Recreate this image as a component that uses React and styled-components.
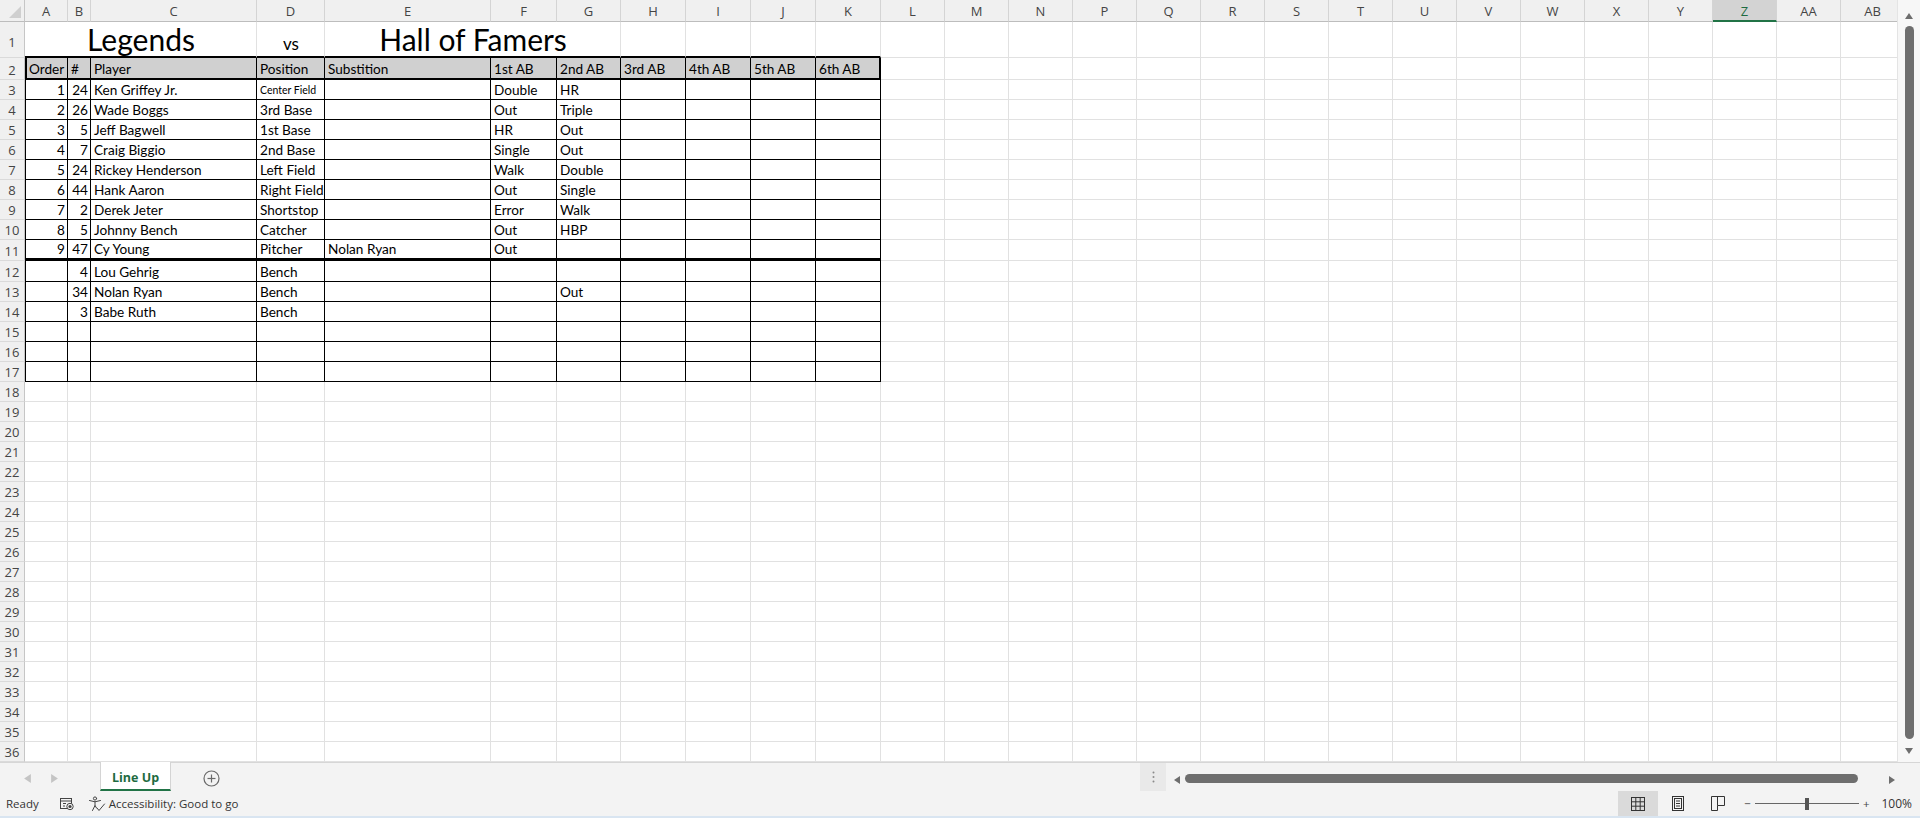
import React from "react";
import styled, { createGlobalStyle } from "styled-components";

const GlobalStyle = createGlobalStyle`
  html, body {
    margin: 0;
    padding: 0;
    overflow: hidden;
    background: #ffffff;
  }
`;

const UI_FONT = `"Open Sans", "Noto Sans", "Liberation Sans", sans-serif`;
const CELL_FONT = `Lato, "Liberation Sans", sans-serif`;
const GRID = "#e1e1e1";
const INK = "#000000";

const Frame = styled("div")`
  width: 1920px;
  height: 818px;
  display: flex;
  flex-direction: column;
  background: #ffffff;
`;

const SheetArea = styled("div")`
  display: flex;
  height: 762px;
  flex: none;
`;

const GridWrap = styled("div")`
  flex: 1;
  overflow: hidden;
  display: flex;
  flex-direction: column;
`;

const Row = styled("div")`
  display: flex;
  height: ${(p) => p.$h}px;
  flex: none;
`;

const Corner = styled("div")`
  width: 25px;
  flex: none;
  box-sizing: border-box;
  background: #f0f0f0;
  border-right: 1px solid #c6c6c6;
  border-bottom: 1px solid #bdbdbd;
  display: flex;
  align-items: flex-end;
  justify-content: flex-end;
  padding: 0 3px 3px 0;
`;

const ColHead = styled("div")`
  width: ${(p) => p.$w}px;
  flex: none;
  box-sizing: border-box;
  background: ${(p) => (p.$active ? "#d3d3d3" : "#f0f0f0")};
  border-right: 1px solid #d4d4d4;
  border-bottom: ${(p) => (p.$active ? "2px solid #217346" : "1px solid #bdbdbd")};
  color: ${(p) => (p.$active ? "#1e6b41" : "#454545")};
  font-family: ${UI_FONT};
  font-size: 13px;
  display: flex;
  align-items: center;
  justify-content: center;
  padding-top: 1px;
`;

const RowHead = styled("div")`
  width: 25px;
  flex: none;
  box-sizing: border-box;
  background: #f0f0f0;
  border-right: 1px solid #c6c6c6;
  border-bottom: 1px solid #dadada;
  color: #454545;
  font-family: ${UI_FONT};
  font-size: 13px;
  line-height: 18px;
  display: flex;
  align-items: flex-end;
  justify-content: center;
  padding-bottom: ${(p) => (p.$tall ? 6 : 0)}px;
`;

const Cell = styled("div")`
  width: ${(p) => p.$w}px;
  flex: none;
  box-sizing: border-box;
  border-right: ${(p) => p.$r || `1px solid ${GRID}`};
  border-bottom: ${(p) => p.$b || `1px solid ${GRID}`};
  box-shadow: ${(p) => (p.$l ? `inset ${p.$l}px 0 0 ${INK}` : "none")};
  background: ${(p) => p.$bg || "transparent"};
  display: flex;
  align-items: flex-end;
  justify-content: ${(p) => p.$align || "flex-start"};
  padding: 0 2px 0 ${(p) => (p.$l ? p.$l + 2 : 3)}px;
  font-family: ${CELL_FONT};
  font-size: ${(p) => p.$size || 13.6}px;
  line-height: 18px;
  color: #000;
  white-space: nowrap;
  overflow: hidden;
`;

const Title = styled("span")`
  font-family: ${CELL_FONT};
  font-size: ${(p) => p.$size}px;
  line-height: 1;
  padding-bottom: ${(p) => p.$pb}px;
`;

const VScroll = styled("div")`
  width: 22px;
  flex: none;
  background: #f7f7f7;
  border-left: 1px solid #e4e4e4;
  display: flex;
  flex-direction: column;
  align-items: center;
`;

const ScrollThumbV = styled("div")`
  width: 9px;
  flex: 1;
  margin: 2px 0;
  border-radius: 5px;
  background: #6e6e6e;
`;

const TabBar = styled("div")`
  height: 29px;
  flex: none;
  display: flex;
  align-items: stretch;
  background: #f3f3f3;
  border-top: 1px solid #d6d6d6;
  box-sizing: border-box;
`;

const NavArrows = styled("div")`
  width: 100px;
  display: flex;
  align-items: center;
  padding: 3px 0 0 23px;
  gap: 18px;
  box-sizing: border-box;
`;

const SheetTab = styled("div")`
  width: 71px;
  box-sizing: border-box;
  background: #ffffff;
  border-left: 1px solid #d4d4d4;
  border-right: 1px solid #d4d4d4;
  border-bottom: 2px solid #217346;
  margin-top: -1px;
  padding-top: 4px;
  display: flex;
  align-items: center;
  justify-content: center;
  font-family: ${UI_FONT};
  font-weight: 700;
  font-size: 12.5px;
  color: #1e6b41;
`;

const AddSheet = styled("div")`
  width: 80px;
  padding-top: 3px;
  display: flex;
  align-items: center;
  justify-content: center;
`;

const Spacer = styled("div")`
  flex: 1;
`;

const HScroll = styled("div")`
  width: 780px;
  display: flex;
  align-items: center;
  padding-top: 3px;
  box-sizing: border-box;
`;

const Grip = styled("div")`
  width: 26px;
  align-self: stretch;
  margin-top: -3px;
  background: #e9e9e9;
  display: flex;
  align-items: center;
  justify-content: center;
`;

const ScrollThumbH = styled("div")`
  width: 673px;
  height: 9px;
  border-radius: 5px;
  background: #6e6e6e;
  margin: 0 4px;
`;

const StatusBar = styled("div")`
  height: 27px;
  flex: none;
  box-sizing: border-box;
  display: flex;
  align-items: center;
  background: #f3f3f3;
  border-bottom: 2px solid #d9e5f1;
  font-family: ${UI_FONT};
  font-size: 11.5px;
  color: #333;
`;

const StatusItem = styled("div")`
  display: flex;
  align-items: center;
  gap: 3px;
  margin-left: ${(p) => p.$ml || 0}px;
`;

const ViewBtn = styled("div")`
  width: 40px;
  height: 25px;
  display: flex;
  align-items: center;
  justify-content: center;
  background: ${(p) => (p.$on ? "#dadada" : "transparent")};
`;

const Zoom = styled("div")`
  display: flex;
  align-items: center;
  margin-left: 6px;
  gap: 4px;
  color: #444;
`;

const SliderTrack = styled("div")`
  width: 104px;
  height: 1px;
  background: #666;
  display: flex;
  align-items: center;
  justify-content: center;
`;

const SliderKnob = styled("div")`
  width: 4px;
  height: 12px;
  background: #555;
`;

const Percent = styled("span")`
  margin: 0 8px 0 12px;
  font-size: 12px;
`;

// column layout
const tableCols = [
  ["A", 43], ["B", 23], ["C", 166], ["D", 68], ["E", 166],
  ["F", 66], ["G", 64], ["H", 65], ["I", 65], ["J", 65], ["K", 65],
];
const extraCols = ["L", "M", "N", "P", "Q", "R", "S", "T", "U", "V", "W", "X", "Y", "Z", "AA", "AB"];
const w = Object.fromEntries(tableCols);

const headers = ["Order", "#", "Player", "Position", "Substition", "1st AB", "2nd AB", "3rd AB", "4th AB", "5th AB", "6th AB"];

const lineup = [
  [1, 24, "Ken Griffey Jr.", "Center Field", "", "Double", "HR"],
  [2, 26, "Wade Boggs", "3rd Base", "", "Out", "Triple"],
  [3, 5, "Jeff Bagwell", "1st Base", "", "HR", "Out"],
  [4, 7, "Craig Biggio", "2nd Base", "", "Single", "Out"],
  [5, 24, "Rickey Henderson", "Left Field", "", "Walk", "Double"],
  [6, 44, "Hank Aaron", "Right Field", "", "Out", "Single"],
  [7, 2, "Derek Jeter", "Shortstop", "", "Error", "Walk"],
  [8, 5, "Johnny Bench", "Catcher", "", "Out", "HBP"],
  [9, 47, "Cy Young", "Pitcher", "Nolan Ryan", "Out", ""],
  ["", 4, "Lou Gehrig", "Bench", "", "", ""],
  ["", 34, "Nolan Ryan", "Bench", "", "", "Out"],
  ["", 3, "Babe Ruth", "Bench", "", "", ""],
  ["", "", "", "", "", "", ""],
  ["", "", "", "", "", "", ""],
  ["", "", "", "", "", "", ""],
];

const blanks = (n) => extraCols.map((c) => <Cell key={c + n} $w={64} />);

function CornerMark() {
  return (
    <svg width="12" height="12" viewBox="0 0 12 12">
      <polygon points="12,0 12,12 0,12" fill="#cfcfcf" />
    </svg>
  );
}

function Tri({ dir, color = "#6e6e6e", size = 8 }) {
  const pts = {
    left: "7,0 7,8 1,4",
    right: "1,0 1,8 7,4",
    up: "0,7 8,7 4,1",
    down: "0,1 8,1 4,7",
  };
  return (
    <svg width={size} height={size} viewBox="0 0 8 8">
      <polygon points={pts[dir]} fill={color} />
    </svg>
  );
}

function TitleRow() {
  const bb = `2px solid ${INK}`;
  return (
    <Row $h={36}>
      <RowHead $tall>1</RowHead>
      <Cell $w={w.A + w.B + w.C} $b={bb} $align="center">
        <Title $size={30} $pb={2}>Legends</Title>
      </Cell>
      <Cell $w={w.D} $b={bb} $align="center">
        <Title $size={17} $pb={4}>vs</Title>
      </Cell>
      <Cell $w={w.E + w.F + w.G} $b={bb} $align="center">
        <Title $size={30} $pb={2}>Hall of Famers</Title>
      </Cell>
      {["H", "I", "J", "K"].map((c) => (
        <Cell key={c} $w={w[c]} $b={bb} />
      ))}
      {blanks(1)}
    </Row>
  );
}

function HeaderRow() {
  const b = `2px solid ${INK}`;
  return (
    <Row $h={22}>
      <RowHead>2</RowHead>
      {tableCols.map(([c, width], i) => (
        <Cell
          key={c}
          $w={width}
          $bg="#d0d0d0"
          $b={b}
          $l={i === 0 ? 2 : 0}
          $r={i === tableCols.length - 1 ? b : `1px solid ${INK}`}
        >
          {headers[i]}
        </Cell>
      ))}
      {blanks(2)}
    </Row>
  );
}

function DataRow({ n, data }) {
  const thin = `1px solid ${INK}`;
  const bottom = n === 11 ? `3px solid ${INK}` : thin;
  const vals = [...data, "", "", "", ""];
  return (
    <Row $h={n === 11 || n === 12 ? 21 : 20}>
      <RowHead>{n}</RowHead>
      {tableCols.map(([c, width], i) => (
        <Cell
          key={c}
          $w={width}
          $r={thin}
          $b={bottom}
          $l={i === 0 ? 1 : 0}
          $align={i < 2 ? "flex-end" : "flex-start"}
          $size={c === "D" && vals[i] === "Center Field" ? 10.5 : undefined}
        >
          {vals[i]}
        </Cell>
      ))}
      {blanks(n)}
    </Row>
  );
}

function EmptyRow({ n }) {
  return (
    <Row $h={20}>
      <RowHead>{n}</RowHead>
      {tableCols.map(([c, width]) => (
        <Cell key={c} $w={width} />
      ))}
      {blanks(n)}
    </Row>
  );
}

function MacroIcon() {
  return (
    <svg width="16" height="14" viewBox="0 0 16 14" fill="none" stroke="#444" strokeWidth="1">
      <rect x="1.5" y="1.5" width="11" height="10" />
      <line x1="1.5" y1="4" x2="12.5" y2="4" />
      <line x1="4" y1="6.5" x2="7" y2="6.5" />
      <line x1="4" y1="9" x2="6" y2="9" />
      <circle cx="11" cy="9.5" r="3.2" fill="#f3f3f3" />
      <circle cx="11" cy="9.5" r="1.6" fill="#444" stroke="none" />
    </svg>
  );
}

function AccessIcon() {
  return (
    <svg width="18" height="16" viewBox="0 0 18 16" fill="none" stroke="#444" strokeWidth="1" strokeLinecap="round">
      <circle cx="7" cy="2.5" r="1.6" />
      <path d="M1.5 4.5 L7 5.8 L12.5 4.5" />
      <path d="M7 5.8 L7 9.5 L4.5 14.5" />
      <path d="M7 9.5 L8.5 12" />
      <path d="M9 12 L11 14.5 L16.5 8" />
    </svg>
  );
}

function NormalIcon() {
  return (
    <svg width="14" height="14" viewBox="0 0 14 14" fill="none" stroke="#333" strokeWidth="1">
      <rect x="0.5" y="0.5" width="13" height="13" />
      <line x1="4.8" y1="0.5" x2="4.8" y2="13.5" />
      <line x1="9.2" y1="0.5" x2="9.2" y2="13.5" />
      <line x1="0.5" y1="4.8" x2="13.5" y2="4.8" />
      <line x1="0.5" y1="9.2" x2="13.5" y2="9.2" />
    </svg>
  );
}

function PageIcon() {
  return (
    <svg width="12" height="15" viewBox="0 0 12 15" fill="none" stroke="#333" strokeWidth="1">
      <rect x="0.5" y="0.5" width="11" height="14" />
      <rect x="2.5" y="2.5" width="7" height="10" />
      <line x1="4" y1="5" x2="8" y2="5" />
      <line x1="4" y1="7.5" x2="8" y2="7.5" />
      <line x1="4" y1="10" x2="8" y2="10" />
    </svg>
  );
}

function BreakIcon() {
  return (
    <svg width="14" height="15" viewBox="0 0 14 15" fill="none" stroke="#333" strokeWidth="1">
      <path d="M0.5 0.5 H13.5 V9.5 H6.5 V14.5 H0.5 Z" />
      <line x1="6.5" y1="0.5" x2="6.5" y2="9.5" />
    </svg>
  );
}

function PlusCircle() {
  return (
    <svg width="17" height="17" viewBox="0 0 17 17" fill="none" stroke="#6a6a6a" strokeWidth="1.2">
      <circle cx="8.5" cy="8.5" r="7.5" />
      <line x1="8.5" y1="4.5" x2="8.5" y2="12.5" />
      <line x1="4.5" y1="8.5" x2="12.5" y2="8.5" />
    </svg>
  );
}

function App() {
  const dataRows = lineup.map((d, i) => <DataRow key={i} n={i + 3} data={d} />);
  const emptyRows = [];
  for (let n = 18; n <= 36; n++) emptyRows.push(<EmptyRow key={n} n={n} />);

  return (
    <Frame>
      <GlobalStyle />
      <SheetArea>
        <GridWrap>
          <Row $h={22}>
            <Corner>
              <CornerMark />
            </Corner>
            {tableCols.map(([c, width]) => (
              <ColHead key={c} $w={width}>{c}</ColHead>
            ))}
            {extraCols.map((c) => (
              <ColHead key={c} $w={64} $active={c === "Z"}>{c}</ColHead>
            ))}
          </Row>
          <TitleRow />
          <HeaderRow />
          {dataRows}
          {emptyRows}
        </GridWrap>
        <VScroll>
          <div style={{ marginTop: 6 }}>
            <Tri dir="up" />
          </div>
          <ScrollThumbV />
          <div style={{ marginBottom: 3 }}>
            <Tri dir="down" />
          </div>
        </VScroll>
      </SheetArea>

      <TabBar>
        <NavArrows>
          <Tri dir="left" color="#c4c4c4" size={9} />
          <Tri dir="right" color="#c4c4c4" size={9} />
        </NavArrows>
        <SheetTab>Line Up</SheetTab>
        <AddSheet>
          <PlusCircle />
        </AddSheet>
        <Spacer />
        <HScroll>
          <Grip>
            <svg width="3" height="12" viewBox="0 0 3 12">
              <circle cx="1.5" cy="1.5" r="1" fill="#8a8a8a" />
              <circle cx="1.5" cy="6" r="1" fill="#8a8a8a" />
              <circle cx="1.5" cy="10.5" r="1" fill="#8a8a8a" />
            </svg>
          </Grip>
          <div style={{ marginLeft: 7 }}>
            <Tri dir="left" />
          </div>
          <ScrollThumbH />
          <Spacer />
          <div style={{ marginRight: 24 }}>
            <Tri dir="right" />
          </div>
        </HScroll>
      </TabBar>

      <StatusBar>
        <StatusItem $ml={6}>Ready</StatusItem>
        <StatusItem $ml={20}>
          <MacroIcon />
        </StatusItem>
        <StatusItem $ml={13}>
          <AccessIcon />
          Accessibility: Good to go
        </StatusItem>
        <Spacer />
        <ViewBtn $on>
          <NormalIcon />
        </ViewBtn>
        <ViewBtn>
          <PageIcon />
        </ViewBtn>
        <ViewBtn>
          <BreakIcon />
        </ViewBtn>
        <Zoom>
          <span>−</span>
          <SliderTrack>
            <SliderKnob />
          </SliderTrack>
          <span>+</span>
        </Zoom>
        <Percent>100%</Percent>
      </StatusBar>
    </Frame>
  );
}

export default App;
